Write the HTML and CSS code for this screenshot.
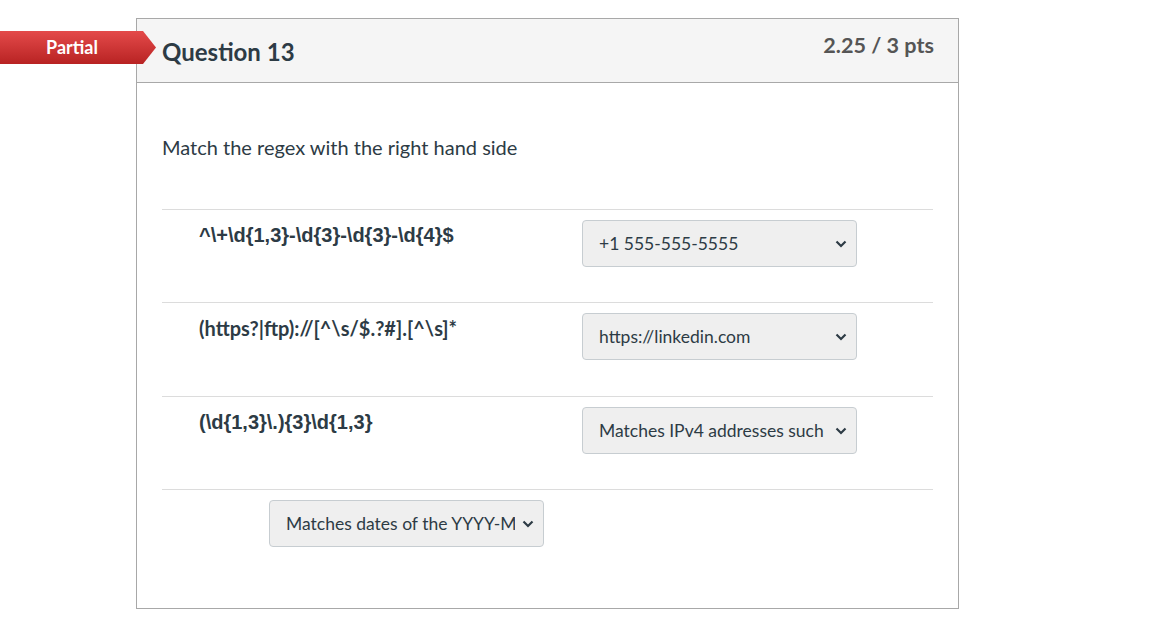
FILE: index.html
```html
<!DOCTYPE html>
<html>
<head>
<meta charset="utf-8">
<link rel="stylesheet" href="styles.css">
</head>
<body>
<div class="page">
  <div class="banner">Partial</div>
  <div class="card">
    <div class="card-header">
      <h2 class="q-title">Question 13</h2>
      <div class="q-pts">2.25 / 3 pts</div>
    </div>
    <div class="card-body">
      <p class="prompt">Match the regex with the right hand side</p>
      <div class="rows">
        <div class="row">
          <div class="regex alt">^\+\d{1,3}-\d{3}-\d{3}-\d{4}$</div>
          <div class="sel-wrap">
            <select class="sel"><option>+1 555-555-5555</option></select>
            <svg class="chev" width="12" height="8" viewBox="0 0 12 8"><path d="M1.5 1.5 L6 6 L10.5 1.5" fill="none" stroke="#2d3b45" stroke-width="2.2"/></svg>
          </div>
        </div>
        <div class="row">
          <div class="regex">(https?|ftp)://[^\s/$.?#].[^\s]*</div>
          <div class="sel-wrap">
            <select class="sel"><option>https://linkedin.com</option></select>
            <svg class="chev" width="12" height="8" viewBox="0 0 12 8"><path d="M1.5 1.5 L6 6 L10.5 1.5" fill="none" stroke="#2d3b45" stroke-width="2.2"/></svg>
          </div>
        </div>
        <div class="row">
          <div class="regex alt">(\d{1,3}\.){3}\d{1,3}</div>
          <div class="sel-wrap">
            <select class="sel"><option>Matches IPv4 addresses such as 192.168.0.1</option></select>
            <svg class="chev" width="12" height="8" viewBox="0 0 12 8"><path d="M1.5 1.5 L6 6 L10.5 1.5" fill="none" stroke="#2d3b45" stroke-width="2.2"/></svg>
          </div>
        </div>
        <div class="row last">
          <div class="sel-wrap extra">
            <select class="sel"><option>Matches dates of the YYYY-MM-DD format</option></select>
            <svg class="chev" width="12" height="8" viewBox="0 0 12 8"><path d="M1.5 1.5 L6 6 L10.5 1.5" fill="none" stroke="#2d3b45" stroke-width="2.2"/></svg>
          </div>
        </div>
      </div>
    </div>
  </div>
</div>
</body>
</html>
```

FILE: styles.css
```css
html, body {
  margin: 0;
  padding: 0;
  background: #fff;
}
body {
  font-family: Lato, "Noto Sans", sans-serif;
  color: #2d3b45;
}
.page {
  position: relative;
  padding: 18px 0 0 136px;
}
.banner {
  position: absolute;
  left: 0;
  top: 31px;
  width: 156px;
  height: 33px;
  box-sizing: border-box;
  padding-right: 12px;
  background: linear-gradient(#e44a4a, #b82323);
  clip-path: polygon(0 0, 143px 0, 156px 50%, 143px 100%, 0 100%);
  color: #fff;
  font-weight: 700;
  font-size: 18px;
  line-height: 32px;
  text-align: center;
  z-index: 2;
}
.card {
  width: 823px;
  height: 591px;
  box-sizing: border-box;
  border: 1px solid #a8a8a8;
}
.card-header {
  height: 64px;
  box-sizing: border-box;
  background: #f5f5f5;
  border-bottom: 1px solid #a8a8a8;
  display: flex;
  justify-content: space-between;
  padding: 0 24px 0 25px;
}
.q-title {
  margin: 0;
  padding-top: 19px;
  font-size: 24px;
  font-weight: 700;
  line-height: 28px;
  color: #2d3b45;
}
.q-pts {
  padding-top: 13px;
  font-size: 21.6px;
  font-weight: 700;
  line-height: 26px;
  color: #555;
}
.card-body {
  padding: 0 25px 0 25px;
}
.prompt {
  margin: 0;
  padding-top: 52px;
  font-size: 20px;
  line-height: 24px;
  height: 126px;
  box-sizing: border-box;
}
.row {
  display: flex;
  align-items: flex-start;
  height: 93.4px;
  box-sizing: border-box;
  border-top: 1px solid #dcdcdc;
  padding-top: 10px;
}
.regex {
  width: 383px;
  padding-left: 37px;
  padding-top: 4px;
  font-size: 20px;
  font-weight: 700;
  line-height: 22px;
  color: #2d3b45;
}
.regex.alt {
  font-family: "Liberation Sans", Arial, sans-serif;
  font-size: 20px;
}
.sel-wrap {
  position: relative;
  width: 275px;
  height: 47px;
}
.sel-wrap.extra {
  margin-left: 107px;
}
.sel {
  -webkit-appearance: none;
  appearance: none;
  width: 275px;
  height: 47px;
  box-sizing: border-box;
  border: 1px solid #c7cdd1;
  border-radius: 4px;
  background: #efefef;
  font-family: Lato, "Noto Sans", sans-serif;
  font-size: 17.5px;
  color: #2d3b45;
  padding: 0 28px 0 16px;
  margin: 0;
}
.chev {
  position: absolute;
  right: 10px;
  top: 20px;
  pointer-events: none;
}
```
